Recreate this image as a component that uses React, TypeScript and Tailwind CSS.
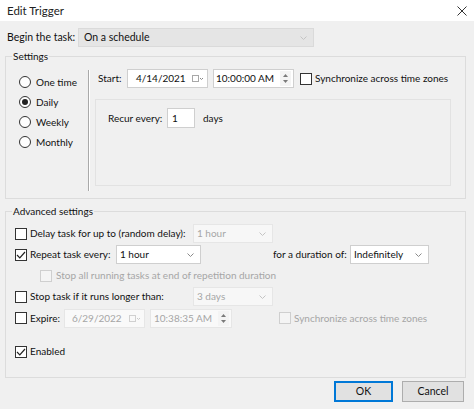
import React from "react";

const Chevron = ({ dim }: { dim?: boolean }) => (
  <svg width="7" height="4" viewBox="0 0 7 4" className="shrink-0">
    <polyline points="0.5,0.5 3.5,3.5 6.5,0.5" fill="none" stroke={dim ? "#c4c4c4" : "#8a8a8a"} strokeWidth="1" />
  </svg>
);

const CalIcon = ({ dim }: { dim?: boolean }) => (
  <svg width="11" height="7" viewBox="0 0 11 7" className="shrink-0">
    <rect x="0.5" y="0.5" width="6" height="6" fill="none" stroke={dim ? "#d0d0d0" : "#a8a8a8"} />
    <polyline points="8,3 9.5,4.5 11,3" fill="none" stroke={dim ? "#c8c8c8" : "#888"} strokeWidth="1" />
  </svg>
);

const Spinner = () => (
  <div className="ml-auto mr-[2px] flex h-[15px] w-[11px] flex-col items-center justify-center gap-[3px] bg-[#f4f4f4]">
    <svg width="5" height="3" viewBox="0 0 5 3">
      <polygon points="2.5,0 5,3 0,3" fill="#7a7a7a" />
    </svg>
    <svg width="5" height="3" viewBox="0 0 5 3">
      <polygon points="0,0 5,0 2.5,3" fill="#7a7a7a" />
    </svg>
  </div>
);

const Checkbox = ({ checked, disabled }: { checked?: boolean; disabled?: boolean }) => (
  <div
    className={`flex h-[12px] w-[12px] shrink-0 items-center justify-center border ${
      disabled ? "border-[#cfcfcf] bg-[#f4f4f4]" : "border-[#333] bg-white"
    }`}
  >
    {checked && (
      <svg width="10" height="8" viewBox="0 0 10 8">
        <polyline points="1,4 3.8,6.8 9,1" fill="none" stroke="#222" strokeWidth="1.2" />
      </svg>
    )}
  </div>
);

const Radio = ({ checked }: { checked?: boolean }) => (
  <div className="flex h-[12px] w-[12px] shrink-0 items-center justify-center rounded-full border border-[#333] bg-white">
    {checked && <div className="h-[6px] w-[6px] rounded-full bg-[#222]" />}
  </div>
);

const Combo = ({ text, width, disabled }: { text: string; width: string; disabled?: boolean }) => (
  <div
    className={`flex h-[19px] shrink-0 items-center justify-between border pl-[3px] pr-[6px] ${width} ${
      disabled ? "border-[#e6e6e6] bg-[#f7f7f7] text-[#a6a6a6]" : "border-[#cfcfcf] bg-white"
    }`}
  >
    <span>{text}</span>
    <Chevron dim={disabled} />
  </div>
);

export default function App() {
  return (
    <div className="h-[409px] w-[474px] overflow-hidden whitespace-nowrap bg-[#f0f0f0] font-['Lato',sans-serif] text-[10px] leading-[15px] text-[#111]">
      <div className="flex h-[21px] items-center justify-between bg-white pl-[7px] pr-[7px] text-[11.5px] text-[#222]">
        <span>Edit Trigger</span>
        <svg width="10" height="10" viewBox="0 0 10 10">
          <path d="M0.5 0.5 L9.5 9.5 M9.5 0.5 L0.5 9.5" stroke="#333" strokeWidth="1" />
        </svg>
      </div>

      <div className="pl-[5px] pr-[8px]">
        <div className="mt-[7px] flex h-[19px] items-center">
          <span className="w-[73px] pl-[2px] text-[10.5px]">Begin the task:</span>
          <div className="flex h-[19px] w-[236px] items-center justify-between border border-[#dadada] bg-[#e5e5e5] pl-[5px] pr-[6px] text-[10.5px]">
            <span>On a schedule</span>
            <Chevron dim />
          </div>
        </div>

        <fieldset className="mt-[2px] border border-[#dcdcdc] pb-[7px]">
          <legend className="ml-[6px] px-[1px]">Settings</legend>
          <div className="flex items-start pt-[2px]">
            <div className="flex w-[82px] flex-col pl-[13px] pt-[6px]">
              {["One time", "Daily", "Weekly", "Monthly"].map((t) => (
                <div key={t} className="flex h-[20px] items-center gap-[5px]">
                  <Radio checked={t === "Daily"} />
                  <span>{t}</span>
                </div>
              ))}
            </div>
            <div className="mt-[4px] h-[121px] w-[2px] border-l border-[#a9a9a9] bg-white" />
            <div className="ml-[5px] flex flex-col pt-[3px]">
              <div className="flex h-[19px] items-center">
                <span className="w-[32px] pl-[3px]">Start:</span>
                <div className="flex h-[19px] w-[81px] items-center border border-[#cfcfcf] bg-white pl-[8px] pr-[4px]">
                  <span>4/14/2021</span>
                  <span className="ml-auto">
                    <CalIcon />
                  </span>
                </div>
                <div className="ml-[5px] flex h-[19px] w-[81px] items-center border border-[#cfcfcf] bg-white pl-[2px]">
                  <span>10:00:00 AM</span>
                  <Spinner />
                </div>
                <div className="ml-[6px]">
                  <Checkbox />
                </div>
                <span className="ml-[3px]">Synchronize across time zones</span>
              </div>
              <div className="mt-[11px] h-[87px] w-[356px] border border-[#e2e2e2] pl-[12px] pt-[8px]">
                <div className="flex h-[20px] items-center">
                  <span className="w-[59px]">Recur every:</span>
                  <div className="flex h-[20px] w-[28px] items-center border border-[#cfcfcf] bg-white pl-[4px]">1</div>
                  <span className="ml-[8px]">days</span>
                </div>
              </div>
            </div>
          </div>
        </fieldset>

        <fieldset className="mt-[5px] h-[174px] border border-[#dcdcdc]">
          <legend className="ml-[6px] px-[1px]">Advanced settings</legend>
          <div className="flex flex-col pl-[9px] pt-[4px]">
            <div className="flex h-[21px] items-center">
              <Checkbox />
              <span className="ml-[3px] w-[163px]">Delay task for up to (random delay):</span>
              <Combo text="1 hour" width="w-[80px]" disabled />
            </div>
            <div className="flex h-[21px] items-center">
              <Checkbox checked />
              <span className="ml-[3px] w-[86px]">Repeat task every:</span>
              <Combo text="1 hour" width="w-[85px]" />
              <span className="ml-[72px] w-[77px]">for a duration of:</span>
              <Combo text="Indefinitely" width="w-[79px]" />
            </div>
            <div className="flex h-[21px] items-center pl-[25px]">
              <Checkbox disabled />
              <span className="ml-[4px] text-[#a6a6a6]">Stop all running tasks at end of repetition duration</span>
            </div>
            <div className="flex h-[21px] items-center">
              <Checkbox />
              <span className="ml-[3px] w-[163px]">Stop task if it runs longer than:</span>
              <Combo text="3 days" width="w-[80px]" disabled />
            </div>
            <div className="flex h-[22px] items-center">
              <Checkbox />
              <span className="ml-[3px] w-[34px]">Expire:</span>
              <div className="flex h-[19px] w-[81px] items-center border border-[#e6e6e6] bg-[#f9f9f9] pl-[7px] pr-[4px] text-[#a6a6a6]">
                <span>6/29/2022</span>
                <span className="ml-auto">
                  <CalIcon dim />
                </span>
              </div>
              <div className="ml-[5px] flex h-[19px] w-[82px] items-center border border-[#e6e6e6] bg-[#f9f9f9] pl-[3px] text-[#a6a6a6]">
                <span>10:38:35 AM</span>
                <Spinner />
              </div>
              <div className="ml-[47px]">
                <Checkbox disabled />
              </div>
              <span className="ml-[3px] text-[#a6a6a6]">Synchronize across time zones</span>
            </div>
            <div className="mt-[12px] flex h-[21px] items-center">
              <Checkbox checked />
              <span className="ml-[3px]">Enabled</span>
            </div>
          </div>
        </fieldset>

        <div className="mt-[3px] flex justify-end gap-[9px] pr-[2px]">
          <button className="h-[21px] w-[59px] border border-[#0078d7] bg-[#e1e1e1] text-[10.5px] shadow-[inset_0_0_0_1px_#0078d7]">
            OK
          </button>
          <button className="h-[21px] w-[62px] border border-[#adadad] bg-[#e1e1e1] text-[10.5px]">Cancel</button>
        </div>
      </div>
    </div>
  );
}
